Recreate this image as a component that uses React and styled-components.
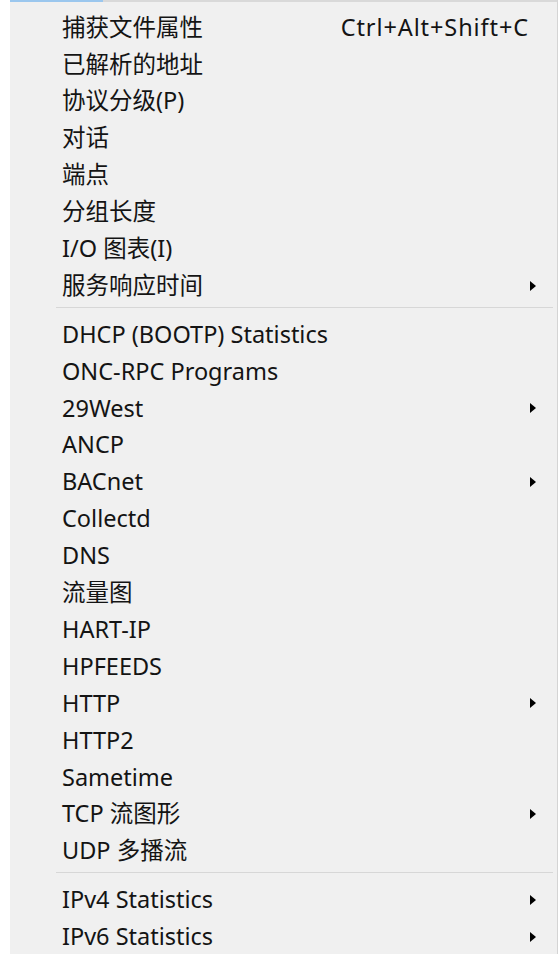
import React from "react";
import styled, { createGlobalStyle } from "styled-components";

const Global = createGlobalStyle`
  html, body {
    margin: 0;
    padding: 0;
    background: #ffffff;
  }
  body {
    font-family: "Noto Sans", "Noto Sans CJK SC", sans-serif;
  }
`;

const Page = styled.div`
  width: 558px;
  height: 954px;
  overflow: hidden;
  padding-left: 10px;
  box-sizing: border-box;
`;

const Menu = styled.div`
  background: #f0f0f0;
  border-right: 1px solid #d4d4d4;
  height: 100%;
  box-sizing: border-box;
`;

const TopEdge = styled.div`
  display: flex;
  height: 3px;
  align-items: flex-start;
`;

const Tab = styled.div`
  width: 93px;
  height: 2px;
  background: #9bc7ee;
`;

const TopLine = styled.div`
  flex: 1;
  height: 2px;
  background: #d9d9d9;
`;

const List = styled.div`
  padding-top: 6px;
`;

const Row = styled.div`
  display: flex;
  align-items: center;
  height: 36.9px;
  padding-left: 52px;
  padding-right: 20px;
  font-size: 23.5px;
  line-height: 1;
  color: #141414;
`;

const Label = styled.span`
  flex: 1;
  white-space: nowrap;
`;

const Shortcut = styled.span`
  white-space: nowrap;
  letter-spacing: 0.9px;
  margin-right: 8px;
`;

const Arrow = styled.span`
  width: 0;
  height: 0;
  border-top: 5px solid transparent;
  border-bottom: 5px solid transparent;
  border-left: 6px solid #000;
  margin-right: 1px;
`;

const Separator = styled.div`
  height: 1px;
  background: #d7d7d7;
  margin: 3px 4px 8px 46px;
`;

const groups = [
  [
    { label: "捕获文件属性", shortcut: "Ctrl+Alt+Shift+C" },
    { label: "已解析的地址" },
    { label: "协议分级(P)" },
    { label: "对话" },
    { label: "端点" },
    { label: "分组长度" },
    { label: "I/O 图表(I)" },
    { label: "服务响应时间", sub: true },
  ],
  [
    { label: "DHCP (BOOTP) Statistics" },
    { label: "ONC-RPC Programs" },
    { label: "29West", sub: true },
    { label: "ANCP" },
    { label: "BACnet", sub: true },
    { label: "Collectd" },
    { label: "DNS" },
    { label: "流量图" },
    { label: "HART-IP" },
    { label: "HPFEEDS" },
    { label: "HTTP", sub: true },
    { label: "HTTP2" },
    { label: "Sametime" },
    { label: "TCP 流图形", sub: true },
    { label: "UDP 多播流" },
  ],
  [
    { label: "IPv4 Statistics", sub: true },
    { label: "IPv6 Statistics", sub: true },
  ],
];

export default function App() {
  return (
    <>
      <Global />
      <Page>
        <Menu>
          <TopEdge>
            <Tab />
            <TopLine />
          </TopEdge>
          <List>
            {groups.map((items, gi) => (
              <React.Fragment key={gi}>
                {gi > 0 && <Separator />}
                {items.map((item) => (
                  <Row key={item.label}>
                    <Label>{item.label}</Label>
                    {item.shortcut && <Shortcut>{item.shortcut}</Shortcut>}
                    {item.sub && <Arrow />}
                  </Row>
                ))}
              </React.Fragment>
            ))}
          </List>
        </Menu>
      </Page>
    </>
  );
}
